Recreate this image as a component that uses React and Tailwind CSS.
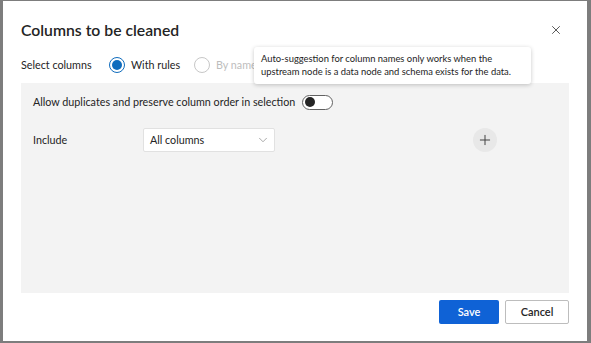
import React from 'react';
import { X, ChevronDown, Plus } from 'lucide-react';

const font = { fontFamily: 'Lato, "Noto Sans", sans-serif' };

const App = () => {
  return (
    <div className="w-[591px] h-[343px] bg-[#7d7d7d] overflow-hidden" style={font}>
      <div className="relative ml-[3px] mt-[1px] w-[584px] h-[340px] bg-white flex flex-col px-[18px] text-[#242424]">
        {/* Header */}
        <div className="flex items-center justify-between pt-[12px] h-[46px]">
          <h1 className="text-[15.75px] font-semibold">Columns to be cleaned</h1>
          <X className="w-[14px] h-[14px] mr-[6px] text-[#424242]" strokeWidth={1.5} />
        </div>

        {/* Select columns */}
        <div className="flex items-center h-[32px] mt-[2px] text-[10.75px]">
          <span className="w-[88px]">Select columns</span>
          <div className="flex items-center gap-[6px] w-[85px]">
            <span className="w-[16px] h-[16px] rounded-full border border-[#0f6cbd] flex items-center justify-center">
              <span className="w-[10px] h-[10px] rounded-full bg-[#0f6cbd]" />
            </span>
            <span>With rules</span>
          </div>
          <div className="flex items-center gap-[6px] text-[#bdbdbd]">
            <span className="w-[16px] h-[16px] rounded-full border border-[#c7c7c7]" />
            <span>By name</span>
          </div>
        </div>

        {/* Panel */}
        <div className="mt-[2px] h-[210px] bg-[#f3f3f3] px-[12px] pt-[10px] text-[10.75px]">
          <div className="flex items-center gap-[7px] h-[18px]">
            <span>Allow duplicates and preserve column order in selection</span>
            <span className="w-[31px] h-[15px] rounded-full border border-[#616161] bg-white flex items-center px-[2px]">
              <span className="w-[10px] h-[10px] rounded-full bg-[#242424]" />
            </span>
          </div>
          <div className="flex items-center mt-[16px] h-[26px]">
            <span className="w-[110px]">Include</span>
            <div className="w-[132px] h-[24px] bg-white border border-[#e1e1e1] rounded-[2px] flex items-center justify-between pl-[6px] pr-[4px]">
              <span>All columns</span>
              <ChevronDown className="w-[14px] h-[14px] text-[#8a8a8a]" strokeWidth={1.25} />
            </div>
            <div className="ml-[198px] w-[24px] h-[24px] rounded-full bg-[#e8e8e8] flex items-center justify-center">
              <Plus className="w-[16px] h-[16px] text-[#424242]" strokeWidth={1.5} />
            </div>
          </div>
        </div>

        {/* Footer */}
        <div className="flex justify-end gap-[6px] mt-[7px]">
          <button className="w-[60px] h-[24px] bg-[#0f62d6] text-white text-[11px] font-semibold rounded-[2px]">Save</button>
          <button className="w-[64px] h-[24px] bg-white border border-[#bdbdbd] text-[11px] font-semibold rounded-[2px]">Cancel</button>
        </div>

        {/* Tooltip */}
        <div className="absolute left-[251px] top-[46px] w-[277px] h-[37px] bg-white rounded-[3px] shadow-[0_1px_4px_rgba(0,0,0,0.22)] px-[7px] pt-[5px] text-[9.4px] leading-[13px] text-[#242424]">
          Auto-suggestion for column names only works when the upstream node is a data node and schema exists for the data.
        </div>
      </div>
    </div>
  );
};

export default App;
